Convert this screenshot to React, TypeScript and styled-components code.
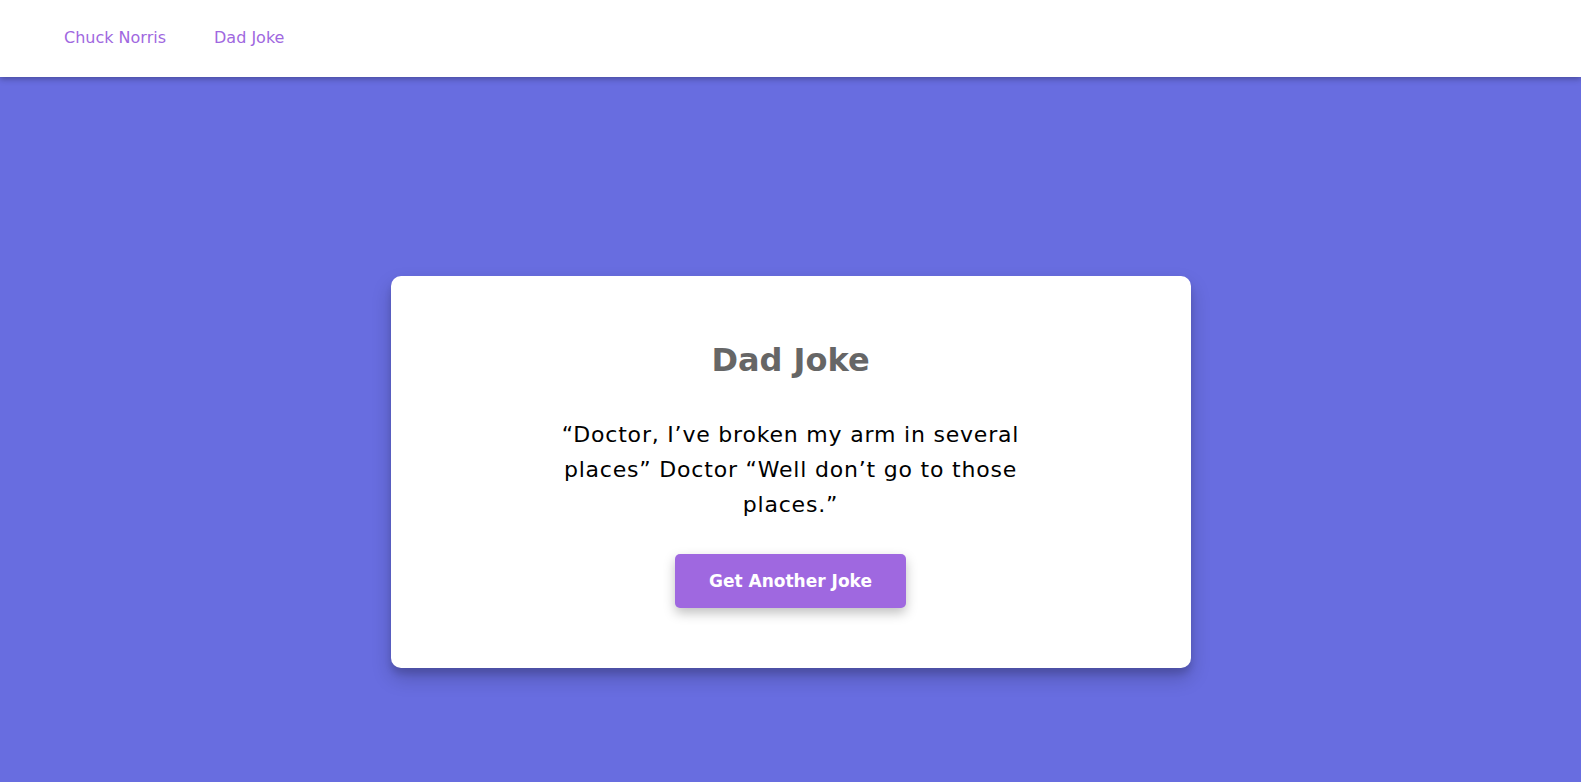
import React from "react";
import styled, { createGlobalStyle } from "styled-components";

const Global = createGlobalStyle`
  * { box-sizing: border-box; }
  html, body { margin: 0; padding: 0; }
  body {
    background: #686de0;
    font-family: "DejaVu Sans", "Noto Sans", sans-serif;
    min-height: 100vh;
  }
`;

const Header = styled.header`
  height: 77px;
  background: #ffffff;
  display: flex;
  align-items: center;
  padding: 0 0 2px 64px;
  gap: 48px;
  box-shadow: 0 2px 6px rgba(0, 0, 0, 0.3);
  position: relative;
  z-index: 1;
`;

const NavLink = styled.a`
  color: #9f68e0;
  font-size: 16px;
  font-weight: 400;
  text-decoration: none;
  cursor: pointer;
`;

const Main = styled.main`
  display: flex;
  justify-content: center;
  padding-top: 199px;
`;

const Card = styled.section`
  width: 800px;
  background: #ffffff;
  border-radius: 10px;
  box-shadow: 0 10px 20px rgba(0, 0, 0, 0.2), 0 6px 6px rgba(0, 0, 0, 0.12);
  padding: 60px 0 60px;
  display: flex;
  flex-direction: column;
  align-items: center;
`;

const Title = styled.h1`
  margin: 0;
  font-size: 32px;
  font-weight: 700;
  color: #666666;
  line-height: 48px;
`;

const Joke = styled.p`
  margin: 33px 0 0;
  max-width: 480px;
  text-align: center;
  font-size: 22px;
  letter-spacing: 0.8px;
  line-height: 35px;
  color: #000000;
`;

const Button = styled.button`
  margin-top: 32px;
  width: 231px;
  height: 54px;
  border: none;
  border-radius: 5px;
  background: #9f68e0;
  color: #ffffff;
  font-family: inherit;
  font-size: 17px;
  font-weight: 700;
  box-shadow: 0 5px 12px rgba(0, 0, 0, 0.25);
  cursor: pointer;
`;

export default function App() {
  return (
    <>
      <Global />
      <Header>
        <NavLink>Chuck Norris</NavLink>
        <NavLink>Dad Joke</NavLink>
      </Header>
      <Main>
        <Card>
          <Title>Dad Joke</Title>
          <Joke>
            “Doctor, I’ve broken my arm in several places” Doctor “Well don’t go to those places.”
          </Joke>
          <Button>Get Another Joke</Button>
        </Card>
      </Main>
    </>
  );
}
